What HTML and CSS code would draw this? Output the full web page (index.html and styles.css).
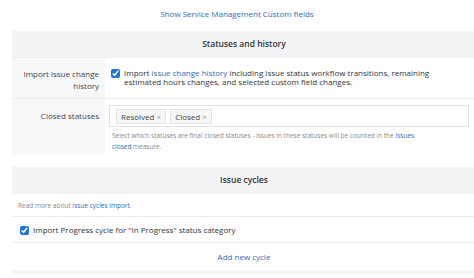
FILE: index.html
```html
<!DOCTYPE html>
<html lang="en">
<head>
    <meta charset="UTF-8">
    <title>Import settings</title>
    <link rel="stylesheet" href="styles.css">
</head>
<body>
    <div class="top-link"><a href="#">Show Service Management Custom fields</a></div>

    <div class="panel">
        <div class="panel-header">Statuses and history</div>
        <div class="row first">
            <div class="label">Import issue change history</div>
            <div class="field">
                <label class="check">
                    <input type="checkbox" checked>
                    <span class="check-text">Import <a href="#">issue change history</a> including issue status workflow transitions, remaining estimated hours changes, and selected custom field changes.</span>
                </label>
            </div>
        </div>
        <div class="row">
            <div class="label mid">Closed statuses</div>
            <div class="field">
                <div class="tag-input">
                    <span class="tag">Resolved <span class="x">&times;</span></span>
                    <span class="tag">Closed <span class="x">&times;</span></span>
                </div>
                <div class="help">Select which statuses are final closed statuses - issues in these statuses will be counted in the <a href="#">Issues closed</a> measure.</div>
            </div>
        </div>
    </div>

    <div class="panel">
        <div class="panel-header">Issue cycles</div>
        <div class="line small"><span>Read more about <a href="#">Issue cycles import</a>.</span></div>
        <div class="line">
            <label class="check">
                <input type="checkbox" checked>
                <span>Import Progress cycle for "In Progress" status category</span>
            </label>
        </div>
        <div class="line center"><a href="#">Add new cycle</a></div>
    </div>
</body>
</html>
```

FILE: styles.css
```css
body {
    margin: 0;
    font-family: "Open Sans", Arial, sans-serif;
    font-size: 8px;
    color: #333;
    background: #fff;
    overflow: hidden;
}
a {
    color: #2e6bb8;
    text-decoration: none;
}
.top-link {
    text-align: center;
    padding: 8px 0 0;
    height: 23px;
}
.panel {
    width: 464px;
    margin: 0 0 12px 12px;
}
.panel-header {
    background: #f3f4f6;
    text-align: center;
    font-weight: 600;
    font-size: 8.5px;
    height: 26px;
    line-height: 26px;
    color: #333;
}
.row {
    display: flex;
    border-top: 1px solid #ececec;
}
.label {
    width: 87px;
    padding: 10px 6px 0 0;
    background: #f7f7f8;
    text-align: right;
    line-height: 12px;
    color: #444;
}
.label.mid {
    padding-top: 11px;
}
.field {
    flex: 1;
    padding: 10px 7px 3px 4px;
}
.first .field {
    padding-bottom: 12px;
}
.check {
    display: flex;
    align-items: flex-start;
    line-height: 9px;
}
.check input {
    width: 9px;
    height: 9px;
    margin: 1px 4px 0 2px;
    accent-color: #1a73e8;
}
.check-text {
    padding-right: 34px;
}
.tag-input {
    border: 1px solid #e2e2e2;
    height: 20px;
    display: flex;
    align-items: center;
    padding-left: 6px;
    gap: 4px;
    margin-top: -4px;
}
.tag {
    background: #f6f6f6;
    border: 1px solid #e4e4e4;
    padding: 1px 4px;
    color: #444;
}
.x {
    color: #999;
}
.help {
    font-size: 6.5px;
    color: #888;
    line-height: 11px;
    padding: 3px 46px 0 3px;
}
.line {
    border-top: 1px solid #ececec;
    height: 25px;
    display: flex;
    align-items: center;
    padding-left: 6px;
}
.small {
    font-size: 6.5px;
    color: #888;
    height: 22px;
}
.center {
    justify-content: center;
    padding-left: 0;
    height: 27px;
    border-bottom: 4px solid #f3f4f6;
}
```
